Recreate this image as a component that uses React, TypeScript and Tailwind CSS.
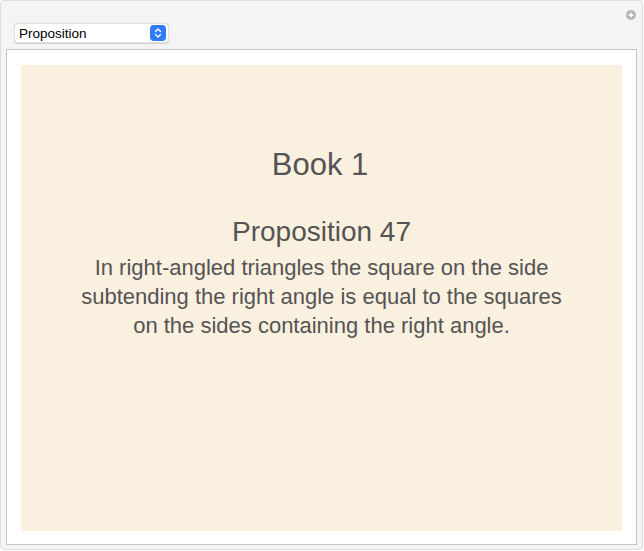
import React from "react";

export default function App() {
  return (
    <div className="w-[644px] h-[551px] bg-white" style={{ fontFamily: '"Liberation Sans", Arial, sans-serif' }}>
      <div className="relative w-[643px] h-[550px] bg-[#f4f4f4] border border-[#dedede] rounded-[4px] flex flex-col">
        <div className="absolute right-[6px] top-[9px] w-[10px] h-[10px] rounded-full bg-[#b5b5b5] flex items-center justify-center">
          <svg width="6" height="6" viewBox="0 0 6 6">
            <path d="M3 0.5V5.5M0.5 3H5.5" stroke="white" strokeWidth="1.4" />
          </svg>
        </div>
        <div className="pt-[22px] pl-[13px] h-[48px]">
          <div className="w-[155px] h-[20px] bg-white rounded-[4px] border border-[#e0e0e0] shadow-[0_0.5px_1px_rgba(0,0,0,0.15)] flex items-center justify-between pl-[4px] pr-[2px]">
            <span className="text-[13.5px] text-black leading-none pt-[2px]">Proposition</span>
            <div className="w-[16px] h-[16px] rounded-[4px] bg-[#2f7bf5] flex items-center justify-center">
              <svg width="8" height="12" viewBox="0 0 8 12" fill="none">
                <path d="M1.5 4.5L4 2L6.5 4.5" stroke="white" strokeWidth="1.4" strokeLinecap="round" strokeLinejoin="round" />
                <path d="M1.5 7.5L4 10L6.5 7.5" stroke="white" strokeWidth="1.4" strokeLinecap="round" strokeLinejoin="round" />
              </svg>
            </div>
          </div>
        </div>
        <div className="ml-[5px] w-[631px] h-[496px] bg-white border border-[#c6c6c6] pt-[15px] pl-[14px]">
          <div className="w-[601px] h-[466px] bg-[#faf0df] flex flex-col items-center pt-[84px] text-[#545454]">
            <div className="text-[31px] leading-[31px] pr-[3px]">Book 1</div>
            <div className="text-[28px] leading-[28px] mt-[38px]">Proposition 47</div>
            <div className="text-[22px] leading-[29px] mt-[7px] text-center w-[560px]">
              In right-angled triangles the square on the side
              <br />
              subtending the right angle is equal to the squares
              <br />
              on the sides containing the right angle.
            </div>
          </div>
        </div>
      </div>
    </div>
  );
}
